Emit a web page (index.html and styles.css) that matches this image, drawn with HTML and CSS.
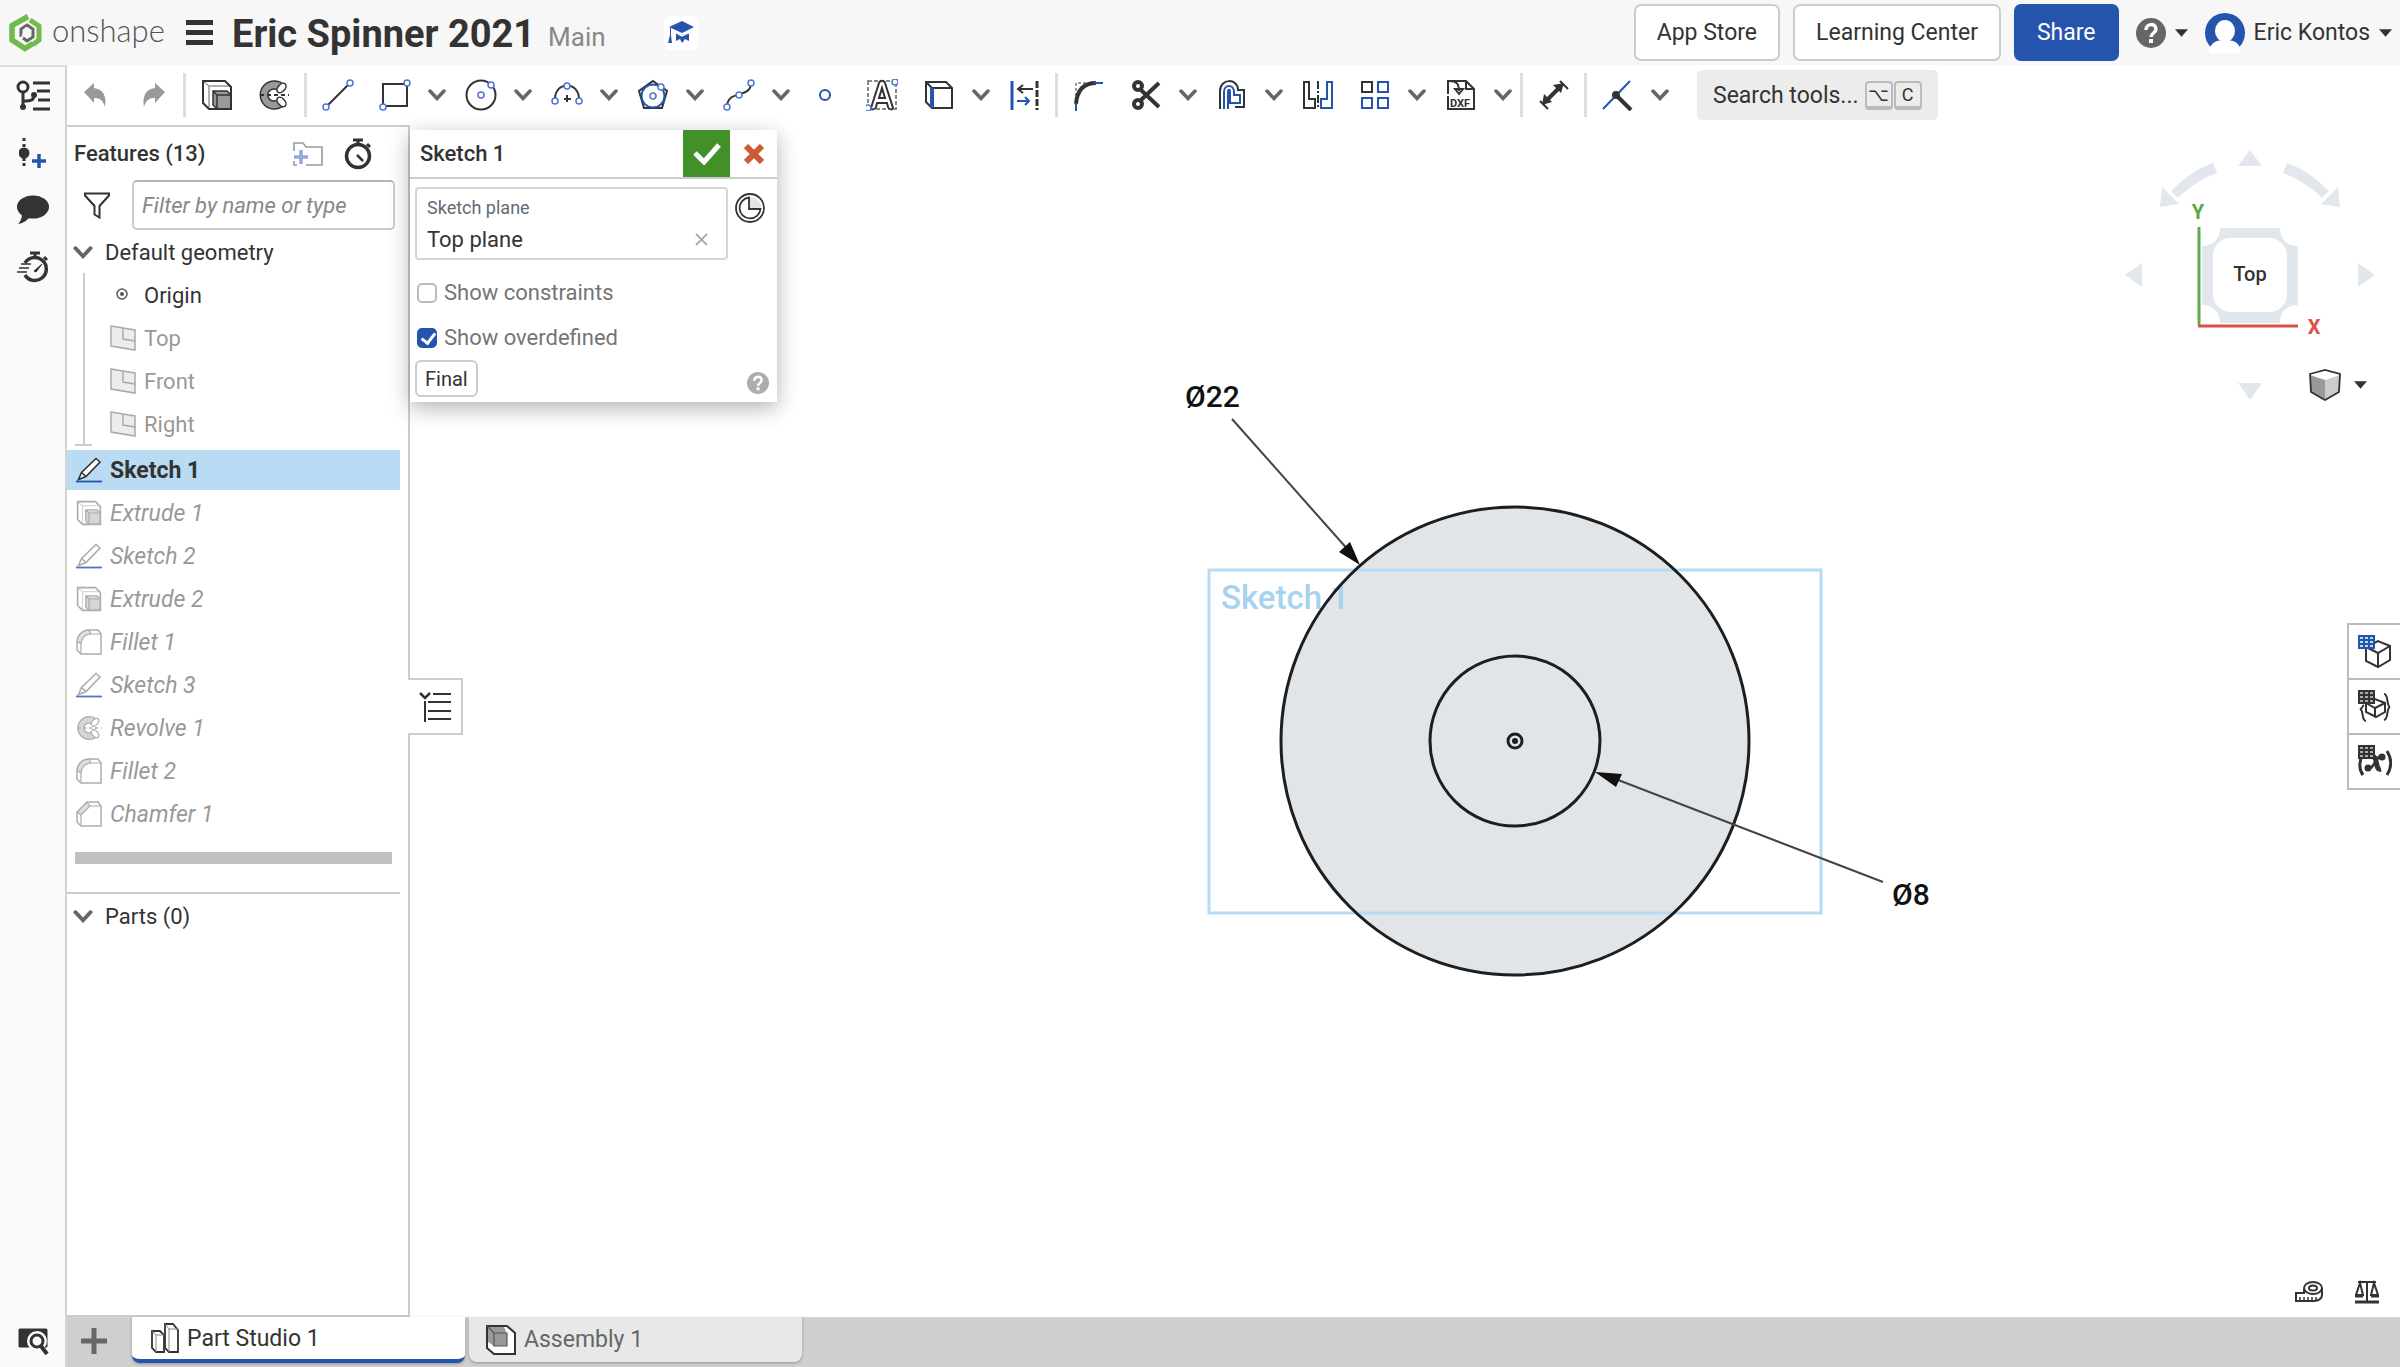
FILE: index.html
```html
<!DOCTYPE html>
<html lang="en">
<head>
    <meta charset="UTF-8">
    <meta name="viewport" content="width=device-width, initial-scale=1.0">
    <title>Eric Spinner 2021 | Part Studio 1</title>
    <link rel="stylesheet" href="styles.css">
</head>
<body>
    <!-- shared icons -->
    <svg class="sprite" aria-hidden="true">
        <symbol id="chevron" viewBox="0 0 18 12"><path d="M2 2l7 7.500 7-7.500" fill="none" stroke="#666" stroke-width="3.500" stroke-linecap="round"/></symbol>
        <symbol id="caret" viewBox="0 0 14 8"><path d="M0 0h14L7 8z" fill="#333"/></symbol>
        <symbol id="plane" viewBox="0 0 26 26"><path d="M1 1l24 4v20L1 21z" fill="#ececec" stroke="#aaa" stroke-width="1.500"/><path d="M13 3v11l12 2" fill="none" stroke="#aaa" stroke-width="1.500"/></symbol>
        <symbol id="extrude" viewBox="0 0 32 32">
            <path d="M2 2h22l6 6v22H8l-6-6z" fill="#fff" stroke="currentColor" stroke-width="2"/>
            <path d="M2 2l6 5v23M8 7h21" fill="none" stroke="currentColor" stroke-width="1.500" opacity=".5"/>
            <path d="M12 12h14l4 4v14H16l-4-4z" fill="currentColor" opacity=".5"/>
            <path d="M12 12h14l4 4v14H16l-4-4zM12 12l4 4v14M16 16h14" fill="none" stroke="currentColor" stroke-width="1.500"/>
        </symbol>
        <symbol id="revolve" viewBox="0 0 32 32">
            <path d="M27 7A14 14 0 1 0 27 25L21 19A6 6 0 1 1 21 13z" fill="currentColor" opacity=".5"/>
            <path d="M27 7A14 14 0 1 0 27 25L21 19A6 6 0 1 1 21 13z" fill="none" stroke="currentColor" stroke-width="1.500"/>
            <ellipse cx="23.500" cy="9" rx="5.500" ry="3.500" transform="rotate(-48 23.500 9)" fill="#fff" stroke="currentColor" stroke-width="1.500"/>
            <ellipse cx="23.500" cy="23" rx="5.500" ry="3.500" transform="rotate(48 23.500 23)" fill="#fff" stroke="currentColor" stroke-width="1.500"/>
            <path d="M2 16h29" stroke="currentColor" stroke-width="2" stroke-dasharray="4 3"/>
        </symbol>
        <symbol id="sketch" viewBox="0 0 26 26">
            <path d="M2.500 22.500l3-7L20 1.500l4 3.500L10 19.500zM5.500 15.500l4.500 4" fill="#fff" stroke="currentColor" stroke-width="1.600"/>
            <path d="M0 24.500h26" stroke="#2554ac" stroke-width="1.800"/>
        </symbol>
        <symbol id="fillet" viewBox="0 0 26 26">
            <path d="M13 1h9l3 4v20H5l-4-4V13A12 12 0 0 1 13 1z" fill="#fff" stroke="currentColor" stroke-width="1.500"/>
            <path d="M13 1l3 4A11 11 0 0 0 5 15l-4-3A12 12 0 0 1 13 1z" fill="currentColor" opacity=".4"/>
            <path d="M13 1l2 4h10M15 5A10 10 0 0 0 5 15v10M1 12l4 3" fill="none" stroke="currentColor" stroke-width="1.200"/>
        </symbol>
        <symbol id="chamfer" viewBox="0 0 26 26">
            <path d="M11 1h11l3 4v20H5l-4-4V11z" fill="#fff" stroke="currentColor" stroke-width="1.500"/>
            <path d="M11 1l3 4-9 9-4-3z" fill="currentColor" opacity=".4"/>
            <path d="M11 1l3 4h11M14 5l-9 9v11M1 11l4 3" fill="none" stroke="currentColor" stroke-width="1.200"/>
        </symbol>
        <symbol id="grid" viewBox="0 0 17 14"><path d="M1 1h15v12H1zM1 5h15M1 9h15M6 1v12M11 1v12" stroke="currentColor" stroke-width="2"/></symbol>
    </svg>

    <header class="topbar">
        <a class="logo" href="#" aria-label="Onshape home">
            <svg width="34" height="38" viewBox="0 0 34 38" fill="none">
                <path d="M20 2.500L4 11.500V26l13 8.500 8-5" stroke="#72ba4c" stroke-width="5.500"/>
                <path d="M22 6l9 6v14l-6 4.500" stroke="#72ba4c" stroke-width="5"/>
                <path d="M13 23v-8l6-4 6 4v8l-6 4-4-3" stroke="#666" stroke-width="3"/>
                <path d="M13 24l5-11" stroke="#f7f7f7" stroke-width="1"/>
            </svg>
            <span>onshape</span>
        </a>
        <button class="burger" aria-label="Document menu"><i></i><i></i><i></i></button>
        <h1>Eric Spinner 2021</h1>
        <span class="branch">Main</span>
        <button class="edu" aria-label="Education">
            <svg width="28" height="26" viewBox="0 0 28 26" fill="#2554ac"><path d="M2 7l13-6 12 6-12 6z"/><path d="M3 8v7l-2 8h4l-1-8V8zM9 12l6 3 7-3v9l-4-2-3 4-2-4-4 2z"/><path d="M8 12l7 4 8-4" stroke="#fff" stroke-width="1.500" fill="none"/></svg>
        </button>
        <div class="account">
            <button class="btn">App Store</button>
            <button class="btn">Learning Center</button>
            <button class="btn primary">Share</button>
            <button class="link help">
                <svg width="30" height="30" viewBox="0 0 30 30" role="img" aria-label="Help"><circle cx="15" cy="15" r="15" fill="#666"/><path d="M10 12c0-7 10-7 10-1 0 4-5 4-5 8" fill="none" stroke="#fff" stroke-width="3.500"/><path d="M13 21h4v4h-4z" fill="#fff"/></svg>
                <svg width="13" height="8"><use href="#caret"/></svg>
            </button>
            <button class="link user">
                <svg width="40" height="40" viewBox="0 0 40 40"><circle cx="20" cy="20" r="20" fill="#2554ac"/><ellipse cx="20" cy="18" rx="10" ry="11" fill="#fff"/><path d="M4 40c0-8 5-12 11-12.500h10c6 .5 11 4.500 11 12.500z" fill="#fff"/></svg>
                Eric Kontos
                <svg width="13" height="8"><use href="#caret"/></svg>
            </button>
        </div>
    </header>

    <div class="main">
        <nav class="rail">
            <button aria-label="Feature list"><svg width="34" height="32" viewBox="0 0 34 32" fill="none" stroke="#333" stroke-width="3"><circle cx="7" cy="7" r="5"/><path d="M7 12v14M7 21c9 0 11-1 11-6M17 3h17M21 11h13M22 20h12M17 29h17"/><circle cx="7" cy="27" r="3" fill="#333" stroke="none"/><circle cx="18" cy="15" r="3" fill="#333" stroke="none"/></svg></button>
            <button aria-label="Insert"><svg width="28" height="32" viewBox="0 0 28 32"><path d="M5 1v5M5 7v4M5 21v4M5 26v5" stroke="#333" stroke-width="3" stroke-dasharray="3 2"/><circle cx="5" cy="16" r="5.500" fill="#333"/><path d="M13 24h14M20 17v14" stroke="#2554ac" stroke-width="3.500"/></svg></button>
            <button aria-label="Comments"><svg width="32" height="30" viewBox="0 0 32 30" fill="#333"><ellipse cx="16" cy="12" rx="16" ry="11.500"/><path d="M5 18c0 5-1 8-4 11 6-1 10-4 12-8z"/></svg></button>
            <button aria-label="History"><svg width="32" height="32" viewBox="0 0 32 32" fill="none" stroke="#333"><path d="M8 12a11.500 11.500 0 1 1 0 12" stroke-width="3.500"/><path d="M13 2h10M18 2v5M27 6l3 3" stroke-width="3"/><path d="M4 13h10M2 17h10M0 21h10" stroke-width="1.500"/><path d="M17 20l8-7-6 8z" fill="#333"/></svg></button>
            <button class="rail-search" aria-label="Search tabs"><svg width="32" height="28" viewBox="0 0 32 28"><path d="M3 2h26v16H3z" stroke="#333" stroke-width="3" fill="#333" stroke-linejoin="round"/><circle cx="20" cy="13" r="10" fill="#fafafa"/><circle cx="20" cy="13" r="6" fill="#fafafa" stroke="#333" stroke-width="3"/><path d="M24 18l6 8" stroke="#333" stroke-width="4"/></svg></button>
        </nav>

        <div class="workspace">
            <div class="toolbar" role="toolbar">
                <button class="tool" aria-label="Undo"><svg width="24" height="26" viewBox="0 0 24 26"><path d="M0 10L10 1v5c9 1 13 8 11 19-2-7-5-9-11-9v5z" fill="#999"/></svg></button>
                <button class="tool" aria-label="Redo"><svg width="24" height="26" viewBox="0 0 24 26"><path d="M24 10L14 1v5C5 7 1 14 3 25c2-7 5-9 11-9v5z" fill="#999"/></svg></button>
                <span class="sep"></span>
                <button class="tool" aria-label="Extrude"><svg width="32" height="32"><use href="#extrude"/></svg></button>
                <button class="tool" aria-label="Revolve"><svg width="32" height="32"><use href="#revolve"/></svg></button>
                <span class="sep"></span>
                <button class="tool" aria-label="Line"><svg class="ico" viewBox="0 0 32 32"><path d="M5 27L27 5"/><g class="pt"><circle cx="4" cy="28" r="3"/><circle cx="28" cy="4" r="3"/></g></svg></button>
                <button class="tool" aria-label="Corner rectangle"><svg class="ico" viewBox="0 0 32 32"><path d="M4 5h24v22H4z"/><g class="pt"><circle cx="4" cy="28" r="3"/><circle cx="28" cy="4" r="3"/></g></svg></button>
                <button class="more" aria-label="More rectangles"><svg width="18" height="12"><use href="#chevron"/></svg></button>
                <button class="tool" aria-label="Circle"><svg class="ico" viewBox="0 0 32 32"><circle cx="16" cy="16" r="14.500"/><g class="pt"><circle cx="16" cy="16" r="3"/><circle cx="26" cy="6" r="3"/></g></svg></button>
                <button class="more" aria-label="More circles"><svg width="18" height="12"><use href="#chevron"/></svg></button>
                <button class="tool" aria-label="Arc"><svg class="ico" viewBox="0 0 32 32"><path d="M4 20C4 2 28 2 28 20M13 20h7M16 16v7"/><g class="pt"><circle cx="4" cy="22" r="3"/><circle cx="28" cy="22" r="3"/><circle cx="16" cy="7" r="3"/></g></svg></button>
                <button class="more" aria-label="More arcs"><svg width="18" height="12"><use href="#chevron"/></svg></button>
                <button class="tool" aria-label="Polygon"><svg class="ico" viewBox="0 0 32 32"><path d="M16 2l14 10-5 17H7L2 12z"/><circle class="blue" cx="16" cy="17" r="11.500"/><g class="pt"><circle cx="16" cy="17" r="3"/><circle cx="24" cy="8" r="3"/></g></svg></button>
                <button class="more" aria-label="More polygons"><svg width="18" height="12"><use href="#chevron"/></svg></button>
                <button class="tool" aria-label="Spline"><svg class="ico" viewBox="0 0 32 32"><path d="M4 28c0-18 24-8 24-24"/><g class="pt"><circle cx="4" cy="28" r="3"/><circle cx="16" cy="16" r="3"/><circle cx="28" cy="4" r="3"/></g></svg></button>
                <button class="more" aria-label="More splines"><svg width="18" height="12"><use href="#chevron"/></svg></button>
                <button class="tool" aria-label="Point"><svg class="ico" viewBox="0 0 32 32"><circle class="blue" cx="16" cy="16" r="5"/></svg></button>
                <button class="tool" aria-label="Text"><svg class="ico" viewBox="0 0 32 32"><path d="M2 2h28v28H2z" stroke="#888" stroke-dasharray="4 2"/><path d="M5 29L13 4c1-3 5-3 6 0l8 25c0 2-4 2-5-1l-1-4H11l-1 4c-1 3-5 3-5 1zM13 19h6l-3-10z" fill="#fff"/><g class="pt"><circle cx="2" cy="29" r="3"/><circle cx="29" cy="3" r="3"/></g></svg></button>
                <button class="tool" aria-label="Use"><svg class="ico" viewBox="0 0 32 32"><path d="M3 3h20l6 6v20H9l-6-6zM3 3l6 6h20M23 3l5 5"/><path class="blue" d="M9 9v20" stroke-width="4"/></svg></button>
                <button class="more" aria-label="More use tools"><svg width="18" height="12"><use href="#chevron"/></svg></button>
                <button class="tool" aria-label="Construction"><svg class="ico" viewBox="0 0 32 32"><path class="blue" d="M3 2v29" stroke-width="3"/><path class="blue" d="M8 22h12M16 18l4 4-4 4"/><path d="M28 2v29" stroke-width="3" stroke-dasharray="7 2"/><path d="M24 10H10M14 6l-5 4 5 4"/></svg></button>
                <span class="sep"></span>
                <button class="tool" aria-label="Sketch fillet"><svg class="ico" viewBox="0 0 32 32"><path d="M3 22V4h18" stroke="#999" stroke-dasharray="3 2"/><path class="thick" d="M3 25C4 12 10 4 23 4"/><path class="blue" d="M3 24v8M21 4h9"/></svg></button>
                <button class="tool" aria-label="Trim"><svg class="ico" viewBox="0 0 32 32"><path class="thick" d="M29 4L11 21M29 28L11 11"/><circle class="thick" cx="8" cy="7" r="4"/><circle class="thick" cx="8" cy="25" r="4"/></svg></button>
                <button class="more" aria-label="More trim tools"><svg width="18" height="12"><use href="#chevron"/></svg></button>
                <button class="tool" aria-label="Offset"><svg class="ico" viewBox="0 0 32 32"><path d="M4 30V12C4-1 22-1 22 11h6v17h-9"/><path class="blue" d="M8 30V13c0-8 10-8 10 0v3h6v8h-10V13c0-3-2-3-2 0v17"/></svg></button>
                <button class="more" aria-label="More offset tools"><svg width="18" height="12"><use href="#chevron"/></svg></button>
                <button class="tool" aria-label="Mirror"><svg class="ico" viewBox="0 0 32 32"><path d="M2 3h5v17h6v9H2z"/><path d="M16 2v28" stroke-dasharray="8 2 2 2"/><path class="blue" d="M30 3h-5v17h-6v9h11z"/></svg></button>
                <button class="tool" aria-label="Linear pattern"><svg class="ico" viewBox="0 0 32 32"><path d="M3 3h10v10H3z"/><path class="blue" d="M19 3h10v10H19zM3 19h10v10H3zM19 19h10v10H19z"/></svg></button>
                <button class="more" aria-label="More patterns"><svg width="18" height="12"><use href="#chevron"/></svg></button>
                <button class="tool" aria-label="Import DXF"><svg class="ico" viewBox="0 0 32 32"><path d="M3 15V2h18l8 8v20H3V17M21 2v8h8"/><path d="M4 2c8 0 10 3 10 10M10 10l4 5 4-5z"/><text class="dxf" x="5" y="28">DXF</text></svg></button>
                <button class="more" aria-label="More import tools"><svg width="18" height="12"><use href="#chevron"/></svg></button>
                <span class="sep"></span>
                <button class="tool" aria-label="Dimension"><svg class="ico" viewBox="0 0 32 32"><path class="thick" d="M8 22L20 10"/><path d="M4 26l2-11 8 8zM26 4L15 6l8 8z" fill="#333" stroke="none"/><path d="M2 22l8 8M22 2l8 8"/></svg></button>
                <span class="sep"></span>
                <button class="tool" aria-label="Coincident"><svg class="ico" viewBox="0 0 32 32"><path class="blue" d="M1 30L28 2"/><path class="thick" d="M16 18l13 13"/><circle cx="14" cy="16" r="4" fill="#333" stroke="none"/></svg></button>
                <button class="more" aria-label="More constraints"><svg width="18" height="12"><use href="#chevron"/></svg></button>
                <button class="search">Search tools...<span class="keys"><kbd>⌥</kbd><kbd>C</kbd></span></button>
            </div>

            <div class="content">
                <aside class="features">
                    <div class="features-head">
                        <h2>Features (13)</h2>
                        <button aria-label="New folder"><svg width="32" height="26" viewBox="0 0 32 26" fill="none"><path d="M2 10V2h9l3 4h16v18H14M2 20v4h3" stroke="#999" stroke-width="1.600"/><path d="M2 16h14M9 9v14" stroke="#8fa9dc" stroke-width="3.500"/></svg></button>
                        <button aria-label="Regeneration times"><svg width="28" height="32" viewBox="0 0 28 32" fill="none" stroke="#333"><circle cx="14" cy="18" r="11.500" stroke-width="3.500"/><path d="M9 2h10M14 2v5M23 6l3 3" stroke-width="3"/><path d="M13 17l6 6" stroke-width="2.500"/></svg></button>
                    </div>
                    <div class="filter">
                        <button aria-label="Filter"><svg width="26" height="27" viewBox="0 0 26 27"><path d="M1 1.500h24v2L15.500 14v11.500l-5-3V14L1 3.500z" fill="none" stroke="#333" stroke-width="2"/></svg></button>
                        <input type="text" placeholder="Filter by name or type" aria-label="Filter by name or type">
                    </div>
                    <button class="group"><svg width="20" height="13"><use href="#chevron"/></svg>Default geometry</button>
                    <ul class="planes">
                        <li class="origin"><svg width="26" height="26" viewBox="0 0 26 26"><circle cx="12" cy="12" r="5" fill="none" stroke="#555" stroke-width="1.500"/><circle cx="12" cy="12" r="2" fill="#555"/></svg>Origin</li>
                        <li><svg width="26" height="26"><use href="#plane"/></svg>Top</li>
                        <li><svg width="26" height="26"><use href="#plane"/></svg>Front</li>
                        <li><svg width="26" height="26"><use href="#plane"/></svg>Right</li>
                    </ul>
                    <ul class="tree">
                        <li class="active"><svg width="26" height="26"><use href="#sketch"/></svg>Sketch 1</li>
                        <li><svg width="26" height="26"><use href="#extrude"/></svg>Extrude 1</li>
                        <li><svg width="26" height="26"><use href="#sketch"/></svg>Sketch 2</li>
                        <li><svg width="26" height="26"><use href="#extrude"/></svg>Extrude 2</li>
                        <li><svg width="26" height="26"><use href="#fillet"/></svg>Fillet 1</li>
                        <li><svg width="26" height="26"><use href="#sketch"/></svg>Sketch 3</li>
                        <li><svg width="26" height="26"><use href="#revolve"/></svg>Revolve 1</li>
                        <li><svg width="26" height="26"><use href="#fillet"/></svg>Fillet 2</li>
                        <li><svg width="26" height="26"><use href="#chamfer"/></svg>Chamfer 1</li>
                    </ul>
                    <div class="rollback"></div>
                    <div class="parts">
                        <button class="group"><svg width="20" height="13"><use href="#chevron"/></svg>Parts (0)</button>
                    </div>
                </aside>

                <main class="canvas">
                    <svg class="drawing" width="800" height="640" viewBox="1160 360 800 640">
                        <circle cx="1515" cy="741" r="234" fill="#e1e5e8"/>
                        <rect class="plane-box" x="1209" y="570" width="612" height="343"/>
                        <text class="plane-name" x="1221" y="609">Sketch 1</text>
                        <g fill="none" stroke="#1c1e20" stroke-width="3">
                            <circle cx="1515" cy="741" r="234"/>
                            <circle cx="1515" cy="741" r="85"/>
                            <circle cx="1515" cy="741" r="7"/>
                        </g>
                        <circle cx="1515" cy="741" r="3" fill="#1c1e20"/>
                        <path d="M1232 419l118 133M1883 882l-270-104" stroke="#444" stroke-width="2"/>
                        <path d="M1360 565l-21-13 11-10zM1595 772l27 2-6 13z" fill="#111"/>
                        <text class="dim" x="1185" y="407">Ø22</text>
                        <text class="dim" x="1892" y="905">Ø8</text>
                    </svg>

                    <section class="dialog">
                        <div class="dialog-head">
                            <h2>Sketch 1</h2>
                            <button class="accept" aria-label="Accept"><svg width="28" height="22" viewBox="0 0 28 22"><path d="M2 10l9 9L26 2" fill="none" stroke="#fff" stroke-width="5"/></svg></button>
                            <button class="cancel" aria-label="Cancel"><svg width="20" height="20" viewBox="0 0 20 20"><path d="M2 2l16 16M18 2L2 18" stroke="#cc5a33" stroke-width="6"/></svg></button>
                        </div>
                        <div class="dialog-body">
                            <div class="plane-row">
                                <div class="field">
                                    <label for="plane-input">Sketch plane</label>
                                    <div class="field-value">
                                        <input id="plane-input" type="text" value="Top plane">
                                        <button aria-label="Clear"><svg width="13" height="13" viewBox="0 0 13 13"><path d="M1 1l11 11M12 1L1 12" stroke="#aaa" stroke-width="1.800"/></svg></button>
                                    </div>
                                </div>
                                <button class="final-icon" aria-label="Sketch preview"><svg width="30" height="30" viewBox="0 0 30 30" fill="none" stroke="#333" stroke-width="1.800"><circle cx="15" cy="15" r="14"/><path d="M15 15V4a11 11 0 0 1 11 11z" fill="#e4e4e4" stroke="none"/><path d="M14 4.500v11.500h11.500A10.500 10.500 0 1 1 14 4.500z"/></svg></button>
                            </div>
                            <label class="check"><input type="checkbox">Show constraints</label>
                            <label class="check"><input type="checkbox" checked>Show overdefined</label>
                            <div class="dialog-foot">
                                <button class="final">Final</button>
                                <button class="hint" aria-label="Help"><svg width="22" height="22" viewBox="0 0 30 30"><circle cx="15" cy="15" r="15" fill="#adadad"/><path d="M10 12c0-7 10-7 10-1 0 4-5 4-5 8" fill="none" stroke="#fff" stroke-width="3.500"/><path d="M13 21h4v4h-4z" fill="#fff"/></svg></button>
                            </div>
                        </div>
                    </section>

                    <button class="drawer" aria-label="Toggle list"><svg width="32" height="30" viewBox="0 0 32 30" fill="none" stroke="#333" stroke-width="2"><path d="M14 2h18M9 10h23M9 19h23M9 27h23M6 9v21"/><path d="M1 1l5 5 5-5" stroke-width="2.500"/></svg></button>

                    <svg class="viewcube" width="300" height="290" viewBox="0 0 300 290">
                        <g fill="#e2e7ee">
                            <path d="M150 20l12 16h-24zM150 270l12-17h-24zM25 145l17-12v24zM275 145l-17-12v24z"/>
                            <path d="M113 33l4 10c-16 6-28 14-39 25l-7-7c13-13 25-22 42-28z"/>
                            <path d="M60 77l2-20 17 17z"/>
                            <path d="M187 33l-4 10c16 6 28 14 39 25l7-7c-13-13-25-22-42-28zM240 77l-2-20-17 17z"/>
                            <path d="M120 98h60c0 11 7 18 18 18v59c-11 0-18 7-18 18h-60c0-11-7-18-18-18v-59c11 0 18-7 18-18z"/>
                        </g>
                        <rect x="113" y="108" width="74" height="74" rx="18" fill="#fff"/>
                        <path d="M99 97v98" stroke="#62ab50" stroke-width="3"/>
                        <path d="M98 196h100" stroke="#d9534a" stroke-width="3"/>
                        <text x="150" y="151" text-anchor="middle" class="face">Top</text>
                        <text x="98" y="89" text-anchor="middle" class="axis-y">Y</text>
                        <text x="214" y="204" text-anchor="middle" class="axis-x">X</text>
                    </svg>
                    <button class="shading" aria-label="View options">
                        <svg width="32" height="32" viewBox="0 0 32 32"><path d="M1 6l15 5v19L2 23z" fill="#999"/><path d="M31 6l-15 5v19l14-7z" fill="#ccc"/><path d="M1 5l15-4 15 4-1 18-14 8-14-8z" fill="none" stroke="#333" stroke-width="1.800"/></svg>
                        <svg width="13" height="8"><use href="#caret"/></svg>
                    </button>

                    <div class="side-tabs">
                        <button aria-label="Configurations"><svg width="34" height="34" viewBox="0 0 34 34"><path d="M8 12l12-6 12 5v14l-12 7-12-6zM8 12l12 6 12-7M20 18v13" fill="#fff" stroke="#333" stroke-width="2"/><svg width="17" height="14" color="#2554ac" fill="#b5dbf5"><use href="#grid"/></svg></svg></button>
                        <button aria-label="Custom tables"><svg width="34" height="34" viewBox="0 0 34 34"><path d="M8 13l9-4 10 4v9l-9 5-10-5zM8 13l9 5 10-5M17 18v8" fill="#fff" stroke="#333" stroke-width="2"/><path d="M6 15c-3 2 0 3-4 4 4 1 1 11 6 12M26 4c5 0 2 12 6 13-4 1-1 12-6 13" fill="none" stroke="#333" stroke-width="2"/><svg width="17" height="14" color="#333" fill="#aaa"><use href="#grid"/></svg></svg></button>
                        <button aria-label="Variables"><svg width="34" height="34" viewBox="0 0 34 34" fill="none" stroke="#333"><path d="M4 11c-3 6-3 14 1 19M29 6c5 8 5 16 0 24" stroke-width="3"/><path d="M13 12c8-3 3 14 10 12" stroke-width="5"/><path d="M24 11c-6-2-8 15-15 13" stroke-width="2.500"/><circle cx="24" cy="12" r="3.500" fill="#333" stroke="none"/><circle cx="10" cy="23" r="3.500" fill="#333" stroke="none"/><svg width="17" height="14" color="#333" fill="#aaa"><use href="#grid"/></svg></svg></button>
                    </div>

                    <div class="measure">
                        <button aria-label="Measure"><svg width="28" height="22" viewBox="0 0 28 22" fill="none" stroke="#333" stroke-width="2"><ellipse cx="18" cy="7" rx="9" ry="6"/><ellipse cx="18" cy="7" rx="4" ry="2.500"/><path d="M9 8v4H1v8h18c5 0 8-3 8-6V7"/><path d="M5 19v-3M9 19v-3M13 19v-3M17 19v-3M21 19v-3" stroke-width="1.500"/></svg></button>
                        <button aria-label="Mass properties"><svg width="24" height="24" viewBox="0 0 24 24" fill="none" stroke="#333" stroke-width="2"><path d="M3 2h18M12 2v19M5 3L1 15h7zM19 3l-3 12h7z"/><path d="M0 16h8M16 16h8M0 22h24" stroke-width="3"/></svg></button>
                    </div>
                </main>
            </div>

            <footer class="tabs">
                <button class="add" aria-label="New tab"><svg width="26" height="26" viewBox="0 0 26 26"><path d="M0 13h26M13 0v26" stroke="#666" stroke-width="5"/></svg></button>
                <button class="tab current"><svg width="30" height="32" viewBox="0 0 30 32" fill="#fff" stroke="#333" stroke-width="1.800"><path d="M2 9h8l4 4v17H6l-4-4z"/><path d="M15 2h8l5 6v22h-9l-4-4z"/><path d="M2 9l4 4v17M6 13h8M15 2l4 5v23M19 7h9" fill="none" stroke="#888" stroke-width="1"/></svg>Part Studio 1</button>
                <button class="tab"><svg width="32" height="32" viewBox="0 0 32 32"><path d="M2 2h20l8 7v21H9l-7-6z" fill="#fff" stroke="#333" stroke-width="2"/><path d="M3 3h16l3 7v12H9l-6-4z" fill="#999"/><path d="M2 2l7 7h13v13H9V9" fill="none" stroke="#555" stroke-width="1.200"/></svg>Assembly 1</button>
            </footer>
        </div>
    </div>
</body>
</html>
```
FILE: styles.css
```css
* {
    margin: 0;
    padding: 0;
    box-sizing: border-box;
}
body {
    font-family: Roboto, "Liberation Sans", sans-serif;
    font-size: 22px;
    color: #333;
    background: #fff;
    display: flex;
    flex-direction: column;
    height: 100vh;
    overflow: hidden;
}
button, input {
    font: inherit;
    color: inherit;
}
button {
    background: none;
    border: none;
    cursor: pointer;
    display: flex;
    align-items: center;
    justify-content: center;
    flex-shrink: 0;
}
svg {
    flex-shrink: 0;
}
ul {
    list-style: none;
}
.sprite {
    position: absolute;
    width: 0;
    height: 0;
}

/* header */
.topbar {
    display: flex;
    align-items: center;
    height: 65px;
    padding: 0 8px;
    background: #f7f7f7;
    flex-shrink: 0;
}
.logo {
    display: flex;
    align-items: center;
    gap: 10px;
    width: 178px;
    color: #555;
    font-family: Lato, sans-serif;
    font-size: 31px;
    font-weight: 300;
    text-decoration: none;
}
.logo span {
    padding-bottom: 6px;
}
.burger {
    flex-direction: column;
    gap: 5px;
    width: 27px;
}
.burger i {
    width: 27px;
    height: 5px;
    background: #333;
}
.topbar h1 {
    margin-left: 19px;
    padding-top: 2px;
    font-size: 38px;
    font-weight: 700;
}
.branch {
    margin-left: 13px;
    padding-top: 8px;
    font-size: 26px;
    color: #888;
}
.edu {
    width: 34px;
    height: 34px;
    margin-left: 58px;
    background: #fff;
    border-radius: 6px;
}
.account {
    display: flex;
    align-items: center;
    margin-left: auto;
    gap: 13px;
    font-size: 23px;
}
.btn {
    height: 57px;
    padding: 0 21px;
    background: #fff;
    border: 2px solid #ccc;
    border-radius: 7px;
}
.btn.primary {
    background: #2554ac;
    border-color: #2554ac;
    color: #fff;
}
.link {
    gap: 9px;
}
.help {
    margin-left: 4px;
}
.user {
    margin-left: 4px;
}

.main {
    display: flex;
    flex: 1;
    min-height: 0;
}

/* left icon rail */
.rail {
    display: flex;
    flex-direction: column;
    width: 67px;
    background: #fafafa;
    border-top: 2px solid #ddd;
    border-right: 2px solid #d4d4d4;
}
.rail button {
    height: 57px;
}
.rail .rail-search {
    height: 50px;
    margin-top: auto;
}
.workspace {
    display: flex;
    flex-direction: column;
    flex: 1;
    min-width: 0;
}

/* sketch toolbar */
.toolbar {
    display: flex;
    align-items: center;
    height: 60px;
    flex-shrink: 0;
}
.tool {
    width: 57px;
    height: 56px;
}
.more {
    width: 29px;
    height: 56px;
    padding-right: 2px;
}
.sep {
    width: 3px;
    height: 44px;
    margin: 0 2px;
    background: #ddd;
    flex-shrink: 0;
}
.ico {
    width: 32px;
    height: 32px;
    fill: none;
    stroke: #333;
    stroke-width: 2px;
}
.ico .blue {
    stroke: #2554ac;
}
.ico .thick {
    stroke-width: 4px;
}
.ico .pt {
    fill: #fff;
    stroke: #4a78d0;
    stroke-width: 1.5px;
}
.dxf {
    font-size: 11px;
    font-weight: 700;
    fill: #333;
    stroke: none;
}
.search {
    gap: 6px;
    height: 50px;
    margin-left: 22px;
    padding: 0 16px;
    background: #ececec;
    border-radius: 5px;
    font-size: 23px;
}
.keys {
    display: flex;
    gap: 1px;
}
.keys kbd {
    width: 28px;
    height: 29px;
    border: 2px solid #bbb;
    border-bottom-width: 4px;
    border-radius: 4px;
    font-family: Roboto, "DejaVu Sans", sans-serif;
    font-size: 18px;
    line-height: 24px;
}

.content {
    display: flex;
    flex: 1;
    min-height: 0;
}

/* feature list */
.features {
    display: flex;
    flex-direction: column;
    width: 343px;
    border-top: 2px solid #ccc;
    border-right: 2px solid #ccc;
    border-bottom: 2px solid #ccc;
}
.features-head {
    display: flex;
    align-items: center;
    gap: 20px;
    height: 53px;
    padding: 0 36px 0 7px;
}
.features-head h2 {
    flex: 1;
    font-size: 22px;
    font-weight: 500;
}
.filter {
    display: flex;
    align-items: center;
    justify-content: space-between;
    height: 50px;
    padding: 0 13px 0 17px;
}
.filter input {
    width: 263px;
    height: 50px;
    padding: 0 8px;
    border: 2px solid #ccc;
    border-top-color: #b5b5b5;
    border-radius: 5px;
}
.filter input::placeholder {
    color: #888;
    font-style: italic;
}
.group {
    justify-content: flex-start;
    gap: 12px;
    height: 45px;
    padding-left: 6px;
}
.planes {
    display: flex;
    flex-direction: column;
    gap: 3px;
    position: relative;
    padding-left: 43px;
    padding-bottom: 3px;
}
/* bracket beside the default geometry */
.planes::before {
    content: '';
    position: absolute;
    left: 16px;
    top: -2px;
    bottom: 2px;
    border-left: 2px solid #ccc;
}
.planes::after {
    content: '';
    position: absolute;
    left: 8px;
    bottom: 1px;
    width: 17px;
    border-bottom: 2px solid #ccc;
}
.planes li, .tree li {
    display: flex;
    align-items: center;
    gap: 8px;
    height: 40px;
    color: #999;
}
.planes .origin {
    color: #333;
}
.tree {
    display: flex;
    flex-direction: column;
    gap: 3px;
    margin-top: 3px;
    margin-right: 8px;
    font-size: 23px;
}
.tree li {
    padding-left: 9px;
    font-style: italic;
}
.tree svg {
    opacity: 0.8;
}
.tree .active {
    background: #b9dbf3;
    color: #333;
    font-style: normal;
    font-weight: 700;
}
.tree .active svg {
    opacity: 1;
}
.rollback {
    height: 12px;
    margin: 18px 16px 28px 8px;
    background: #c0c0c0;
}
.parts {
    margin-right: 8px;
    border-top: 2px solid #ccc;
}

/* graphics area */
.canvas {
    flex: 1;
    position: relative;
    min-width: 0;
}
.drawing {
    position: absolute;
    left: 750px;
    top: 235px;
}
.plane-box {
    fill: none;
    stroke: #b5dcf4;
    stroke-width: 3px;
}
.plane-name {
    font-size: 33px;
    font-weight: 500;
    fill: #a5d3f0;
}
.dim {
    font-size: 30px;
    font-weight: 500;
    fill: #111;
}

/* sketch dialog */
.dialog {
    position: absolute;
    left: 0;
    top: 5px;
    width: 367px;
    background: #fff;
    box-shadow: 0 6px 20px rgba(0, 0, 0, 0.3);
}
.dialog-head {
    display: flex;
    align-items: center;
    height: 49px;
    padding-left: 10px;
    border-bottom: 2px solid #ccc;
}
.dialog-head h2 {
    flex: 1;
    font-size: 22px;
    font-weight: 500;
}
.dialog-head button {
    width: 47px;
    height: 47px;
}
.accept {
    background: #419128;
}
.dialog-body {
    padding: 8px 8px 5px 5px;
}
.plane-row {
    display: flex;
    align-items: flex-start;
    justify-content: space-between;
    margin-bottom: 10px;
}
.field {
    width: 313px;
    height: 73px;
    padding: 8px 10px;
    border: 2px solid #d6d6d6;
    border-radius: 4px;
}
.field label {
    display: block;
    font-size: 18px;
    line-height: 22px;
    color: #5f6b75;
}
.field-value {
    display: flex;
    align-items: center;
    justify-content: space-between;
    height: 41px;
    padding-right: 8px;
}
.field-value input {
    width: 200px;
    border: none;
}
.final-icon {
    margin: 6px 4px 0 0;
}
.check {
    display: flex;
    align-items: center;
    gap: 7px;
    height: 45px;
    padding-left: 2px;
    color: #757575;
}
.check input {
    appearance: none;
    position: relative;
    width: 20px;
    height: 20px;
    background: #fff;
    border: 2px solid #bbb;
    border-radius: 5px;
}
.check input:checked {
    background: #2554ac;
    border-color: #2554ac;
}
.check input:checked::after {
    content: '';
    position: absolute;
    left: 5px;
    top: 0;
    width: 6px;
    height: 11px;
    border: solid #fff;
    border-width: 0 3px 3px 0;
    transform: rotate(38deg);
}
.dialog-foot {
    display: flex;
    align-items: flex-end;
    justify-content: space-between;
}
.final {
    height: 37px;
    padding: 0 8px;
    border: 2px solid #ccc;
    border-radius: 6px;
    font-size: 20px;
}
.hint {
    margin-bottom: 3px;
}

.drawer {
    position: absolute;
    left: -2px;
    top: 553px;
    width: 55px;
    height: 57px;
    background: #fff;
    border: 2px solid #ccc;
    border-left: none;
}

/* view cube */
.viewcube {
    position: absolute;
    right: 0;
    top: 5px;
}
.face {
    font-size: 20px;
    font-weight: 500;
    fill: #333;
}
.axis-y, .axis-x {
    font-size: 20px;
    font-weight: 700;
}
.axis-y {
    fill: #5ba84a;
}
.axis-x {
    fill: #d9534a;
}
.shading {
    position: absolute;
    right: 33px;
    top: 244px;
    gap: 13px;
}
.side-tabs {
    position: absolute;
    right: 0;
    top: 498px;
    background: #fff;
    border: 2px solid #bbb;
    border-right: none;
}
.side-tabs button {
    width: 51px;
    height: 53px;
}
.side-tabs button + button {
    height: 55px;
    border-top: 2px solid #bbb;
}
.measure {
    position: absolute;
    right: 21px;
    bottom: 13px;
    display: flex;
    align-items: center;
    gap: 32px;
}

/* document tabs */
.tabs {
    display: flex;
    align-items: flex-start;
    height: 50px;
    background: #cfcfcf;
    font-size: 23px;
    flex-shrink: 0;
}
.add {
    width: 65px;
    height: 48px;
    padding-right: 11px;
}
.tab {
    justify-content: flex-start;
    gap: 7px;
    width: 333px;
    height: 45px;
    margin-right: 4px;
    padding-left: 16px;
    background: #e8e8e8;
    border-radius: 0 0 8px 8px;
    box-shadow: 0 1px 3px rgba(0, 0, 0, 0.3);
    color: #666;
}
.tab.current {
    height: 46px;
    padding-left: 18px;
    background: #fff;
    border-bottom: 4px solid #2554ac;
    color: #333;
}
```
